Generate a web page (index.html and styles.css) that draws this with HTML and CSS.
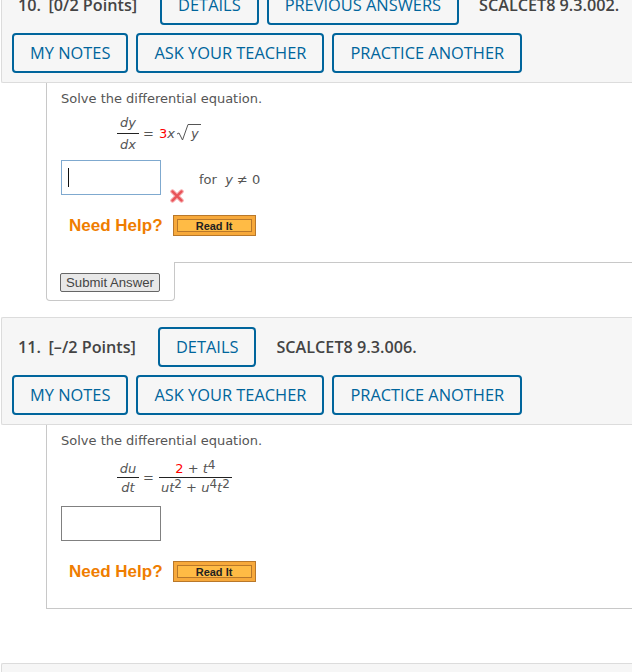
FILE: index.html
```html
<!DOCTYPE html>
<html lang="en">
<head>
<meta charset="utf-8">
<title>Questions</title>
<link rel="stylesheet" href="styles.css">
</head>
<body>
<main class="page">
  <section class="question">
    <header class="panel">
      <div class="row">
        <span class="num">10.</span>
        <span class="points">[0/2 Points]</span>
        <button class="btn details-a">DETAILS</button>
        <button class="btn">PREVIOUS ANSWERS</button>
        <span class="code code-a">SCALCET8 9.3.002.</span>
      </div>
      <div class="row second">
        <button class="btn">MY NOTES</button>
        <button class="btn">ASK YOUR TEACHER</button>
        <button class="btn">PRACTICE ANOTHER</button>
      </div>
    </header>
    <div class="body body-a">
      <p class="prompt">Solve the differential equation.</p>
      <div class="equation eq-a">
        <span class="frac tall narrow"><span class="top"><i>dy</i></span><span class="bot"><i>dx</i></span></span>
        <span class="eq">=</span>
        <span class="red">3</span><i>x</i><svg class="sqrt" width="12" height="17" viewBox="0 0 12 17"><path d="M0 10 L2 9 L5.5 16 L11 0.5 L12 0.5" fill="none" stroke="#555" stroke-width="1"/></svg><i class="radicand">y</i>
      </div>
      <div class="answer-row">
        <span class="field focused"><span class="caret"></span></span>
        <svg class="mark" width="14" height="14" viewBox="0 0 14 14"><path class="mark-halo" d="M2.5 2.5 L11.5 11.5 M11.5 2.5 L2.5 11.5"/><path class="mark-core" d="M2.5 2.5 L11.5 11.5 M11.5 2.5 L2.5 11.5"/></svg>
        <span class="cond">for&nbsp; <i>y</i> ≠ 0</span>
      </div>
      <div class="help">
        <span class="need">Need Help?</span>
        <span class="read"><span class="read-in">Read It</span></span>
      </div>
    </div>
    <div class="submit-box">
      <button class="submit">Submit Answer</button>
    </div>
  </section>

  <section class="question q2">
    <header class="panel">
      <div class="row">
        <span class="num">11.</span>
        <span class="points">[–/2 Points]</span>
        <button class="btn details-b">DETAILS</button>
        <span class="code code-b">SCALCET8 9.3.006.</span>
      </div>
      <div class="row second">
        <button class="btn">MY NOTES</button>
        <button class="btn">ASK YOUR TEACHER</button>
        <button class="btn">PRACTICE ANOTHER</button>
      </div>
    </header>
    <div class="body body-b">
      <p class="prompt">Solve the differential equation.</p>
      <div class="equation eq-b">
        <span class="frac narrow"><span class="top"><i>du</i></span><span class="bot"><i>dt</i></span></span>
        <span class="eq">=</span>
        <span class="frac wide"><span class="top"><span class="red">2</span> + <i>t</i><sup>4</sup></span><span class="bot"><i>ut</i><sup>2</sup> + <i>u</i><sup>4</sup><i>t</i><sup>2</sup></span></span>
      </div>
      <div class="answer-row plain">
        <span class="field"></span>
      </div>
      <div class="help">
        <span class="need">Need Help?</span>
        <span class="read"><span class="read-in">Read It</span></span>
      </div>
    </div>
  </section>

  <section class="question q3">
    <header class="panel stub"></header>
  </section>
</main>
</body>
</html>
```
FILE: styles.css
```css
* { box-sizing: border-box; }
html, body { margin: 0; padding: 0; height: 672px; overflow: hidden; background: #fff; }
.page { margin-top: -25px; font-family: "DejaVu Sans", sans-serif; color: #555; }
.panel {
  margin-left: 1px;
  background: #f6f6f6;
  border: 1px solid #dcdcdc;
  border-right: 0;
  border-radius: 2px 0 0 2px;
  padding: 9px 0 9px 10px;
  font-family: "Open Sans", sans-serif;
}
.row { display: flex; align-items: center; height: 40px; }
.row.second { margin-top: 8px; gap: 8px; }
.num, .points, .code { font-size: 16.2px; font-weight: 600; color: #444; white-space: nowrap; padding-bottom: 1px; }
.num { margin-left: 6px; width: 30px; }
.points { margin-left: 0.5px; }
.btn {
  height: 40px;
  padding: 0 16px 1px;
  margin: 0;
  background: transparent;
  border: 2px solid #00659c;
  border-radius: 4px;
  color: #00659c;
  font: 400 16.4px "Open Sans", sans-serif;
  white-space: nowrap;
}
.details-a { margin: 0 8px 0 23px; }
.details-b { margin: 0 0 0 22px; }
.code-a { margin-left: 20px; }
.code-b { margin-left: 20px; }
.body {
  margin-left: 46px;
  border-left: 1px solid #c8c8c8;
  border-bottom: 1px solid #c8c8c8;
  padding-left: 14px;
  font-size: 13px;
}
.body-a { height: 180px; }
.body-b { height: 184px; }
.prompt { margin: 0; padding-top: 8px; line-height: 16px; }
.equation { display: flex; align-items: center; margin-left: 56px; }
.eq-a { height: 53px; }
.eq-b { height: 57px; }
.red { color: #f00; }
.eq { margin: 0 5px 0 4px; }
.frac { display: inline-flex; flex-direction: column; align-items: center; line-height: 17px; }
.frac .top { border-bottom: 1px solid #222; width: 100%; text-align: center; white-space: nowrap; }
.frac .bot { white-space: nowrap; padding-top: 1px; }
.tall { line-height: 20px; }
.narrow { width: 22px; }
.wide { width: 73px; }
sup { font-size: 12px; line-height: 0; vertical-align: 4px; }
.sqrt { margin: -3px 0 0 2px; }
.radicand { border-top: 1px solid #555; line-height: 18px; margin-top: -1px; padding: 0 2px 0 2px; }
.answer-row { display: flex; align-items: flex-start; height: 54px; }
.field {
  display: flex;
  align-items: center;
  width: 100px;
  height: 35px;
  background: #fff;
  border: 1px solid #808080;
  padding-left: 6px;
}
.field.focused { border-color: #7fa9cf; }
.caret { width: 1px; height: 19px; background: #111; }
.mark { margin: 29px 0 0 9px; }
.mark-halo { fill: none; stroke: #f6a5a8; stroke-width: 4.4; stroke-linecap: round; }
.mark-core { fill: none; stroke: #e85358; stroke-width: 2.4; stroke-linecap: round; }
.cond { margin: 12px 0 0 15px; line-height: 16px; }
.help { display: flex; align-items: center; gap: 10px; margin-left: 8px; height: 23px; }
.need { font: 700 17px "Liberation Sans", sans-serif; color: #ef7d00; }
.read {
  display: flex;
  width: 83px;
  height: 21px;
  padding: 3px;
  background: #f7a93b;
  border: 1px solid #b9782a;
}
.read-in {
  flex: 1;
  display: flex;
  align-items: center;
  justify-content: center;
  padding-top: 1px;
  background: #ffbb45;
  border: 1px solid #b9782a;
  font: 700 11px "Liberation Sans", sans-serif;
  color: #222;
}
.submit-box {
  position: relative;
  margin: -1px 0 0 46px;
  width: 129px;
  height: 39px;
  background: #fff;
  border: 1px solid #c8c8c8;
  border-top: 0;
  border-radius: 0 0 4px 4px;
  padding: 11px 0 0 13px;
}
.submit {
  display: block;
  width: 100px;
  height: 19px;
  padding: 0;
  background: #e8e8e8;
  border: 1px solid #666;
  border-radius: 2px;
  font: 13.2px "Liberation Sans", sans-serif;
  color: #444;
}
.q2 { margin-top: 16px; }
.q3 { margin-top: 54px; }
.stub { height: 40px; }
```
